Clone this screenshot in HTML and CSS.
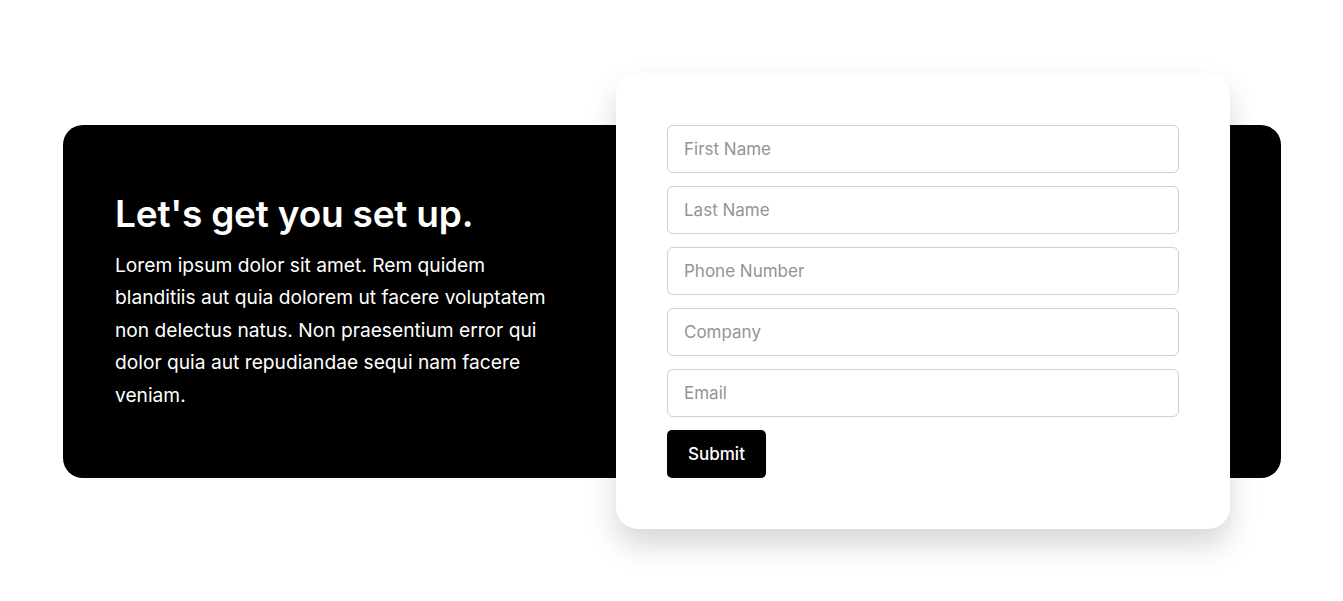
FILE: index.html
```html
<!DOCTYPE html>
<html lang="en">
<head>
<meta charset="utf-8">
<title>Get set up</title>
<link rel="stylesheet" href="styles.css">
</head>
<body>
  <main class="page">
    <section class="signup">
      <div class="signup-band"></div>
      <div class="intro">
        <h1 class="intro-title">Let's get you set up.</h1>
        <p class="intro-text">Lorem ipsum dolor sit amet. Rem quidem blanditiis aut quia dolorem ut facere voluptatem non delectus natus. Non praesentium error qui dolor quia aut repudiandae sequi nam facere veniam.</p>
      </div>
      <form class="card">
        <input class="field" type="text" placeholder="First Name">
        <input class="field" type="text" placeholder="Last Name">
        <input class="field" type="tel" placeholder="Phone Number">
        <input class="field" type="text" placeholder="Company">
        <input class="field" type="email" placeholder="Email">
        <button class="submit" type="button">Submit</button>
      </form>
    </section>
  </main>
</body>
</html>
```
FILE: styles.css
```css
* {
  box-sizing: border-box;
}

html, body {
  margin: 0;
  background: #fff;
}

body {
  font-family: Inter, "Noto Sans", sans-serif;
  color: #000;
}

.page {
  padding: 73px 62px 72px 63px;
}

/* black band runs across row 2; the form card spans all three rows */
.signup {
  display: grid;
  grid-template-columns: 553px 614px 51px;
  grid-template-rows: 52px 353px 51px;
  width: 1218px;
}

.signup-band {
  grid-column: 1 / -1;
  grid-row: 2;
  background: #000;
  border-radius: 20px;
}

.intro {
  grid-column: 1;
  grid-row: 2;
  align-self: center;
  padding-left: 52px;
  width: 500px;
  color: #fff;
}

.intro-title {
  margin: 0 0 13px;
  font-size: 37px;
  font-weight: 600;
  letter-spacing: -0.2px;
  line-height: 44px;
}

.intro-text {
  margin: 0;
  font-size: 19.2px;
  line-height: 32.5px;
}

.card {
  grid-column: 2;
  grid-row: 1 / -1;
  background: #fff;
  border-radius: 22px;
  box-shadow: 0 16px 30px rgba(0, 0, 0, 0.16);
  padding: 52px 51px 51px;
  display: flex;
  flex-direction: column;
  align-items: flex-start;
  gap: 13px;
}

.field {
  width: 512px;
  height: 48px;
  flex: none;
  border: 1px solid #cfcfcf;
  border-radius: 6px;
  padding: 0 16px;
  font-family: inherit;
  font-size: 17px;
  color: #000;
  background: #fff;
  outline: none;
}

.field::placeholder {
  color: #949494;
}

.submit {
  width: 99px;
  height: 48px;
  flex: none;
  border: 0;
  border-radius: 5px;
  background: #000;
  color: #fff;
  font-family: inherit;
  font-size: 17px;
  font-weight: 500;
  cursor: pointer;
}
```
